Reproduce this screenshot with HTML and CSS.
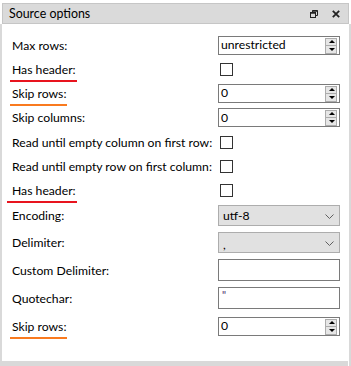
FILE: index.html
```html
<!DOCTYPE html>
<html>
<head>
<meta charset="utf-8">
<link rel="stylesheet" href="styles.css">
</head>
<body>
<div class="window">
  <div class="titlebar">
    <span class="title">Source options</span>
    <span class="tools">
      <svg class="icon" width="8" height="8" viewBox="0 0 8 8"><path d="M2.5 0.5h5v5h-2M2.5 0.5v2" fill="none" stroke="#222" stroke-width="1"/><rect x="0.5" y="2.5" width="5" height="5" fill="none" stroke="#222" stroke-width="1"/><path d="M0.5 3h5M2.5 1h5" stroke="#222" stroke-width="1.6"/></svg>
      <svg class="icon close" width="8" height="8" viewBox="0 0 8 8"><path d="M0.8 0.8L7.2 7.2M7.2 0.8L0.8 7.2" stroke="#222" stroke-width="1.8"/></svg>
    </span>
  </div>
  <div class="frame">
    <div class="content">
      <div class="grid">
        <span class="label">Max rows:</span>
        <div class="spin"><span class="val">unrestricted</span><span class="spinbtns"><span class="sb up"></span><span class="sb down"></span></span></div>

        <span class="label"><span class="mark red">Has header:</span></span>
        <span class="check"></span>

        <span class="label"><span class="mark orange">Skip rows:</span></span>
        <div class="spin"><span class="val">0</span><span class="spinbtns"><span class="sb up"></span><span class="sb down"></span></span></div>

        <span class="label">Skip columns:</span>
        <div class="spin"><span class="val">0</span><span class="spinbtns"><span class="sb up"></span><span class="sb down"></span></span></div>

        <span class="label">Read until empty column on first row:</span>
        <span class="check"></span>

        <span class="label">Read until empty row on first column:</span>
        <span class="check"></span>

        <span class="label"><span class="mark red wide">Has header:</span></span>
        <span class="check"></span>

        <span class="label">Encoding:</span>
        <div class="combo"><span class="val">utf-8</span><svg class="chev" width="9" height="5" viewBox="0 0 9 5"><path d="M0.5 0.5L4.5 4.5L8.5 0.5" fill="none" stroke="#606060" stroke-width="1"/></svg></div>

        <span class="label">Delimiter:</span>
        <div class="combo"><span class="val comma">,</span><svg class="chev" width="9" height="5" viewBox="0 0 9 5"><path d="M0.5 0.5L4.5 4.5L8.5 0.5" fill="none" stroke="#606060" stroke-width="1"/></svg></div>

        <span class="label">Custom Delimiter:</span>
        <div class="text"></div>

        <span class="label">Quotechar:</span>
        <div class="text"><span class="val quote">"</span></div>

        <span class="label"><span class="mark orange">Skip rows:</span></span>
        <div class="spin"><span class="val">0</span><span class="spinbtns"><span class="sb up"></span><span class="sb down"></span></span></div>
      </div>
    </div>
  </div>
</div>
</body>
</html>
```
FILE: styles.css
```css
html, body {
  margin: 0;
  padding: 0;
  background: #ffffff;
}
body {
  font-family: Lato, "Open Sans", sans-serif;
  font-size: 12.2px;
  color: #000;
  width: 351px;
  height: 366px;
  overflow: hidden;
}
.window {
  padding-top: 3px;
  display: flex;
  flex-direction: column;
  height: 363px;
}
.titlebar {
  margin-left: 2px;
  width: 345px;
  height: 19px;
  background: #dadada;
  border: 1px solid #c6c6c6;
  display: flex;
  align-items: center;
  justify-content: space-between;
  flex: none;
}
.title {
  padding-left: 6px;
  font-size: 12.4px;
  line-height: 19px;
}
.tools {
  display: flex;
  align-items: center;
  gap: 14px;
  padding-right: 8px;
}
.icon { display: block; }
.frame {
  flex: 1;
  display: flex;
  border-right: 2px solid #d9d9d9;
  padding-right: 1px;
}
.content {
  flex: 1;
  border-left: 2px solid #d9d9d9;
  border-bottom: 5px solid #d9d9d9;
}
.grid {
  display: grid;
  grid-template-columns: 206px 122px;
  grid-template-rows: 24px 24px 24px 25px 25px 23px 24px 27px 27px 28px 28px 28px;
  align-items: center;
  padding-top: 9px;
  padding-left: 10px;
}
.label {
  white-space: nowrap;
  line-height: 16px;
  padding-top: 1px;
}
.mark {
  display: inline-block;
  position: relative;
}
.mark::after {
  content: "";
  position: absolute;
  left: -2px;
  right: -1px;
  bottom: -4px;
  height: 2px;
}
.mark.red::after { background: #e8141e; }
.mark.orange::after { background: #f97a1f; }
.mark.wide::after { left: -5px; }
.spin, .text, .combo {
  height: 17px;
  border: 1px solid #7a7a7a;
  display: flex;
  align-items: center;
  position: relative;
}
.spin { height: 17px; }
.text { height: 20px; }
.combo {
  height: 19px;
  background: #e1e1e1;
  border-color: #adadad;
}
.val {
  padding-left: 2px;
  line-height: 16px;
}
.combo .val { padding-left: 4px; }
.comma { padding-top: 4px; }
.quote { padding-left: 3px; margin-top: -6px; font-size: 11px; color: #4a2a6a; }
.chev {
  position: absolute;
  right: 5px;
  top: 8px;
}
.spinbtns {
  position: absolute;
  right: 2px;
  top: 1px;
  width: 12px;
  display: flex;
  flex-direction: column;
}
.sb {
  height: 6px;
  background: #e6e6e6;
  border: 1px solid #acacac;
  position: relative;
}
.sb.down { border-top: none; height: 7px; }
.sb::after {
  content: "";
  position: absolute;
  left: 3px;
  width: 0;
  height: 0;
  border-left: 3px solid transparent;
  border-right: 3px solid transparent;
}
.sb.up::after { top: 1px; border-bottom: 3px solid #000; }
.sb.down::after { top: 2px; border-top: 3px solid #000; }
.check {
  width: 11px;
  height: 11px;
  border: 1px solid #333;
  margin-left: 2px;
}
```
